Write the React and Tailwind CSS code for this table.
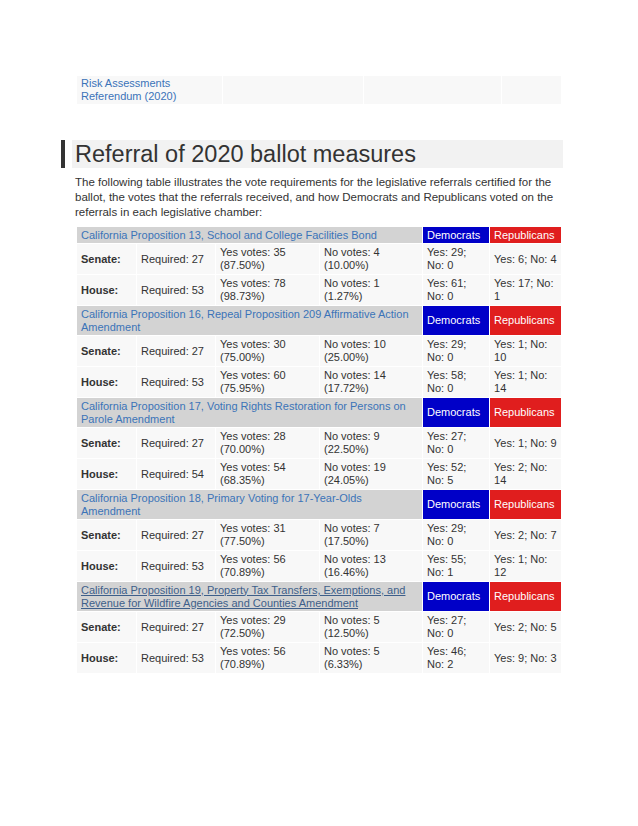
const measures = [
  {
    title: "California Proposition 13, School and College Facilities Bond",
    rows: [
      ["Senate:", "Required: 27", "Yes votes: 35", "(87.50%)", "No votes: 4", "(10.00%)", "Yes: 29; No: 0", "Yes: 6; No: 4"],
      ["House:", "Required: 53", "Yes votes: 78", "(98.73%)", "No votes: 1", "(1.27%)", "Yes: 61; No: 0", "Yes: 17; No: 1"],
    ],
  },
  {
    title: "California Proposition 16, Repeal Proposition 209 Affirmative Action Amendment",
    rows: [
      ["Senate:", "Required: 27", "Yes votes: 30", "(75.00%)", "No votes: 10", "(25.00%)", "Yes: 29; No: 0", "Yes: 1; No: 10"],
      ["House:", "Required: 53", "Yes votes: 60", "(75.95%)", "No votes: 14", "(17.72%)", "Yes: 58; No: 0", "Yes: 1; No: 14"],
    ],
  },
  {
    title: "California Proposition 17, Voting Rights Restoration for Persons on Parole Amendment",
    rows: [
      ["Senate:", "Required: 27", "Yes votes: 28", "(70.00%)", "No votes: 9", "(22.50%)", "Yes: 27; No: 0", "Yes: 1; No: 9"],
      ["House:", "Required: 54", "Yes votes: 54", "(68.35%)", "No votes: 19", "(24.05%)", "Yes: 52; No: 5", "Yes: 2; No: 14"],
    ],
  },
  {
    title: "California Proposition 18, Primary Voting for 17-Year-Olds Amendment",
    rows: [
      ["Senate:", "Required: 27", "Yes votes: 31", "(77.50%)", "No votes: 7", "(17.50%)", "Yes: 29; No: 0", "Yes: 2; No: 7"],
      ["House:", "Required: 53", "Yes votes: 56", "(70.89%)", "No votes: 13", "(16.46%)", "Yes: 55; No: 1", "Yes: 1; No: 12"],
    ],
  },
  {
    title: "California Proposition 19, Property Tax Transfers, Exemptions, and Revenue for Wildfire Agencies and Counties Amendment",
    visited: true,
    rows: [
      ["Senate:", "Required: 27", "Yes votes: 29", "(72.50%)", "No votes: 5", "(12.50%)", "Yes: 27; No: 0", "Yes: 2; No: 5"],
      ["House:", "Required: 53", "Yes votes: 56", "(70.89%)", "No votes: 5", "(6.33%)", "Yes: 46; No: 2", "Yes: 9; No: 3"],
    ],
  },
];

const cell = "bg-[#f8f8f8] px-[4px] py-[2px] align-middle";

const Measure = ({ m }) => (
  <>
    <tr>
      <td colSpan={4} className="bg-[#d3d3d3] px-[4px] py-[1.5px] align-middle">
        <a
          className={
            m.visited
              ? "text-[#3e5f8a] underline"
              : "text-[#3b73b8]"
          }
        >
          {m.title}
        </a>
      </td>
      <td className="bg-[#0000c8] px-[4px] py-[1.5px] text-white align-middle">Democrats</td>
      <td className="bg-[#e01e1e] px-[4px] py-[1.5px] text-white align-middle">Republicans</td>
    </tr>
    {m.rows.map((r) => (
      <tr key={r[0]}>
        <td className={`${cell} font-bold`}>{r[0]}</td>
        <td className={cell}>{r[1]}</td>
        <td className={cell}>{r[2]}<br />{r[3]}</td>
        <td className={cell}>{r[4]}<br />{r[5]}</td>
        <td className={cell}>{r[6]}</td>
        <td className={cell}>{r[7]}</td>
      </tr>
    ))}
  </>
);

export default function App() {
  return (
    <div
      className="w-[638px] h-[826px] bg-white text-[#333]"
      style={{ fontFamily: '"Liberation Sans", Arial, sans-serif' }}
    >
      <div className="pl-[75px] w-[563px] pt-[75px]">
        <table className="ml-[1px] w-[486px] border-separate border-spacing-[1px] text-[11px] leading-[13px] table-fixed">
          <colgroup>
            <col className="w-[145px]" />
            <col className="w-[140px]" />
            <col className="w-[137px]" />
            <col />
          </colgroup>
          <tbody>
            <tr>
              <td className="bg-[#f8f8f8] px-[4px] py-[1px]">
                <a className="text-[#3b73b8]">Risk Assessments<br />Referendum (2020)</a>
              </td>
              <td className="bg-[#f8f8f8]"></td>
              <td className="bg-[#f8f8f8]"></td>
              <td className="bg-[#f8f8f8]"></td>
            </tr>
          </tbody>
        </table>

        <div className="flex items-stretch -ml-[14px] mt-[35px] h-[28px]">
          <div className="w-[4px] bg-[#333] mr-[7px]"></div>
          <h2 className="flex-1 bg-[#f2f2f2] pl-[3px] text-[23.5px] leading-[28px] text-[#333]">
            Referral of 2020 ballot measures
          </h2>
        </div>

        <p className="mt-[7px] text-[11.5px] leading-[15px] text-[#333]">
          The following table illustrates the vote requirements for the legislative referrals certified for the
          ballot, the votes that the referrals received, and how Democrats and Republicans voted on the
          referrals in each legislative chamber:
        </p>

        <table className="mt-[6px] ml-[1px] w-[486px] border-separate border-spacing-[1px] text-[11px] leading-[13px] table-fixed">
          <colgroup>
            <col className="w-[59px]" />
            <col className="w-[78px]" />
            <col className="w-[103px]" />
            <col className="w-[102px]" />
            <col className="w-[66px]" />
            <col />
          </colgroup>
          <tbody>
            {measures.map((m) => (
              <Measure key={m.title} m={m} />
            ))}
          </tbody>
        </table>
      </div>
    </div>
  );
}
